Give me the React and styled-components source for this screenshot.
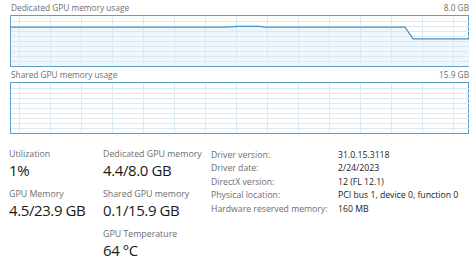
import { Fragment } from 'react';
import styled, { createGlobalStyle } from 'styled-components';

const GlobalStyle = createGlobalStyle`
  html, body {
    margin: 0;
    padding: 0;
    background: #fff;
  }
  body {
    font-family: 'Open Sans', 'Noto Sans', sans-serif;
    color: #1a1a1a;
  }
`;

const Page = styled.div`
  width: 474px;
  height: 274px;
  overflow: hidden;
  display: flex;
  flex-direction: column;
  padding: 0 5px 0 10px;
  box-sizing: border-box;
`;

const ChartHeader = styled.div`
  height: 15px;
  display: flex;
  align-items: center;
  justify-content: space-between;
  font-size: 8.3px;
  color: #6e6e6e;
  padding-left: 1px;
`;

const ChartBox = styled.div`
  height: 52px;
  border: 1px solid #5aa0c9;
  box-sizing: border-box;
  background: #fff;
  svg {
    display: block;
  }
`;

const Stats = styled.div`
  display: flex;
  margin-left: -1px;
  margin-top: 14px;
`;

const Column = styled.div`
  width: ${(p) => p.$w}px;
  display: flex;
  flex-direction: column;
`;

const Label = styled.div`
  font-size: 8.8px;
  line-height: 12px;
  color: #6e6e6e;
`;

const Value = styled.div`
  font-size: 15px;
  line-height: 20px;
  letter-spacing: -0.4px;
  color: #1a1a1a;
  margin-bottom: 8px;
`;

const InfoGrid = styled.div`
  display: grid;
  grid-template-columns: 127px auto;
  grid-auto-rows: 13.5px;
  align-items: center;
  font-size: 8.7px;
`;

const InfoKey = styled.div`
  color: #6e6e6e;
`;

const InfoVal = styled.div`
  color: #1a1a1a;
`;

const W = 458;
const H = 50;

const Grid = () => {
  const vs = [];
  for (let x = 7.5; x < W; x += 31) vs.push(Math.round(x) + 0.5);
  const hs = [];
  for (let i = 1; i < 10; i++) hs.push(Math.round((H * i) / 10) + 0.5);
  return (
    <g stroke="#d9eaf4" strokeWidth="1" shapeRendering="crispEdges">
      {vs.map((x) => (
        <line key={'v' + x} x1={x} y1={0} x2={x} y2={H} />
      ))}
      {hs.map((y) => (
        <line key={'h' + y} x1={0} y1={y} x2={W} y2={y} />
      ))}
    </g>
  );
};

const usage = [
  [0, 11.2],
  [215, 11.2],
  [226, 10.3],
  [249, 10.3],
  [254, 11.2],
  [394, 11.2],
  [402, 22.8],
  [W, 22.8],
];

const UsageChart = () => {
  const line = usage.map(([x, y]) => `${x},${y}`).join(' ');
  const area = `0,${H} ${line} ${W},${H}`;
  return (
    <svg width={W} height={H} viewBox={`0 0 ${W} ${H}`}>
      <polygon points={area} fill="#f1f6fa" />
      <Grid />
      <polyline points={line} fill="none" stroke="#4693c2" strokeWidth="1.2" />
    </svg>
  );
};

const EmptyChart = () => (
  <svg width={W} height={H} viewBox={`0 0 ${W} ${H}`}>
    <Grid />
  </svg>
);

const driverInfo = [
  ['Driver version:', '31.0.15.3118'],
  ['Driver date:', '2/24/2023'],
  ['DirectX version:', '12 (FL 12.1)'],
  ['Physical location:', 'PCI bus 1, device 0, function 0'],
  ['Hardware reserved memory:', '160 MB'],
];

export default function App() {
  return (
    <>
      <GlobalStyle />
      <Page>
        <ChartHeader>
          <span>Dedicated GPU memory usage</span>
          <span>8.0 GB</span>
        </ChartHeader>
        <ChartBox>
          <UsageChart />
        </ChartBox>
        <ChartHeader>
          <span>Shared GPU memory usage</span>
          <span>15.9 GB</span>
        </ChartHeader>
        <ChartBox>
          <EmptyChart />
        </ChartBox>
        <Stats>
          <Column $w={94}>
            <Label>Utilization</Label>
            <Value>1%</Value>
            <Label>GPU Memory</Label>
            <Value>4.5/23.9 GB</Value>
          </Column>
          <Column $w={108}>
            <Label>Dedicated GPU memory</Label>
            <Value>4.4/8.0 GB</Value>
            <Label>Shared GPU memory</Label>
            <Value>0.1/15.9 GB</Value>
            <Label>GPU Temperature</Label>
            <Value>64 °C</Value>
          </Column>
          <InfoGrid>
            {driverInfo.map(([k, v]) => (
              <Fragment key={k}>
                <InfoKey>{k}</InfoKey>
                <InfoVal>{v}</InfoVal>
              </Fragment>
            ))}
          </InfoGrid>
        </Stats>
      </Page>
    </>
  );
}
